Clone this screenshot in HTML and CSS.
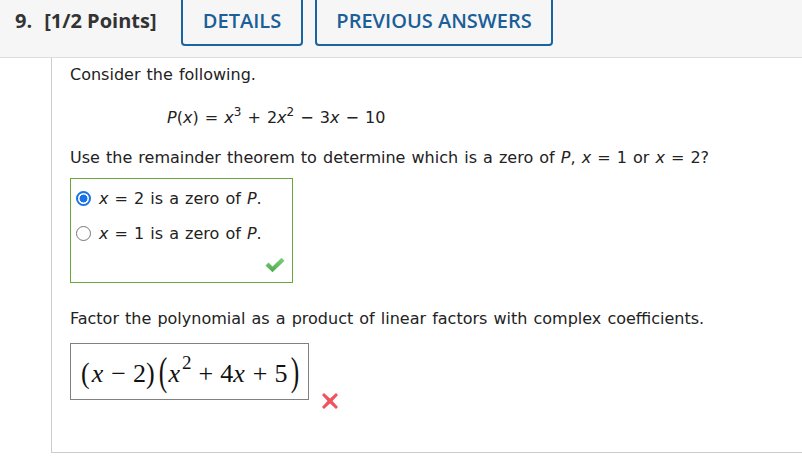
FILE: index.html
```html
<!DOCTYPE html>
<html>
<head>
<meta charset="utf-8">
<link rel="stylesheet" href="styles.css">
</head>
<body>
<div class="header">
  <div class="title"><span class="num">9.</span><span>[1/2 Points]</span></div>
  <div class="tabs">
    <div class="tab tab-details">DETAILS</div>
    <div class="tab tab-prev">PREVIOUS ANSWERS</div>
  </div>
</div>
<div class="panel">
  <p class="intro">Consider the following.</p>
  <p class="formula"><i>P</i>(<i>x</i>) = <i>x</i><sup>3</sup> + 2<i>x</i><sup>2</sup> &minus; 3<i>x</i> &minus; 10</p>
  <p class="q">Use the remainder theorem to determine which is a zero of <i>P</i>, <i>x</i> = 1 or <i>x</i> = 2?</p>
  <div class="choices">
    <div class="choice"><span class="radio on"></span><span><i>x</i> = 2 is a zero of <i>P</i>.</span></div>
    <div class="choice"><span class="radio"></span><span><i>x</i> = 1 is a zero of <i>P</i>.</span></div>
    <div class="mark">
      <svg width="22" height="16" viewBox="0 0 22 16"><defs><linearGradient id="g" x1="0" y1="0" x2="0" y2="1"><stop offset="0" stop-color="#7fd07f"/><stop offset="1" stop-color="#4aa94a"/></linearGradient></defs><path d="M1.5 8.5 L4.5 5.5 L8.5 9.5 L17.5 0.8 L20.5 3.8 L8.5 15.2 Z" fill="url(#g)"/></svg>
    </div>
  </div>
  <p class="q2">Factor the polynomial as a product of linear factors with complex coefficients.</p>
  <div class="answer-row">
    <div class="mathbox"><span class="par">(</span><i>x</i><span class="op">&minus;</span>2<span class="par r">)</span><span class="big">(</span><i>x</i><sup>2</sup><span class="op">+</span>4<i>x</i><span class="op">+</span>5<span class="big r">)</span></div>
    <svg class="cross" width="18" height="18" viewBox="0 0 18 18"><path d="M3 1 L9 6.5 L15 1 L17 3 L11.5 9 L17 15 L15 17 L9 11.5 L3 17 L1 15 L6.5 9 L1 3 Z" fill="#f0545e"/></svg>
  </div>
</div>
</body>
</html>
```
FILE: styles.css
```css
html, body { margin: 0; padding: 0; background: #fff; }
body { width: 802px; height: 457px; overflow: hidden; font-family: "DejaVu Sans", Verdana, sans-serif; color: #222; }

.header {
  height: 57px;
  background: #f6f6f6;
  border-bottom: 1px solid #dcdcdc;
  display: flex;
  align-items: flex-start;
  font-family: "Open Sans", sans-serif;
}
.title {
  font-weight: 700;
  font-size: 20px;
  line-height: 24px;
  color: #333;
  padding: 9px 0 0 15px;
  width: 166px;
  display: flex;
}
.title .num { margin-right: 12px; }
.tabs { display: flex; gap: 12px; margin-top: -6px; }
.tab {
  border: 2px solid #1a64a0;
  border-radius: 4px;
  background: #f6f6f6;
  height: 52px;
  box-sizing: border-box;
  color: #1b5e98;
  font-size: 20px;
  font-weight: 600;
  display: flex;
  align-items: center;
  justify-content: center;
  padding-top: 1px;
}
.tab-details { width: 122px; }
.tab-prev { width: 238px; }

.panel {
  margin-left: 51px;
  border-left: 1px solid #ccc;
  border-bottom: 1px solid #ccc;
  height: 394px;
  padding-left: 18px;
  font-size: 16px;
  line-height: 19px;
  word-spacing: 1px;
}
.panel p { margin: 0; }
.intro { padding-top: 7px; }
.formula { padding: 24px 0 0 97px; }
sup { font-size: 12px; vertical-align: 7px; line-height: 0; }
.q { padding-top: 21px; }
.choices {
  margin-top: 10.5px;
  width: 223px;
  height: 105px;
  border: 1.5px solid #6aa73b;
  box-sizing: border-box;
  position: relative;
  padding-top: 2px;
}
.choice { display: flex; align-items: center; height: 35px; padding-left: 5px; }
.radio {
  width: 15px; height: 15px;
  border: 1px solid #767676;
  border-radius: 50%;
  box-sizing: border-box;
  margin-right: 8px;
  background: #fff;
}
.radio.on { border: 2px solid #1a73e8; background: radial-gradient(circle, #1a73e8 0 3.8px, #fff 4.2px); }
.mark { position: absolute; right: 6px; bottom: 9px; line-height: 0; }
.q2 { padding-top: 26.5px; }
.answer-row { display: flex; align-items: flex-start; margin-top: 14.5px; }
.mathbox {
  border: 1px solid #808080;
  height: 57px;
  box-sizing: border-box;
  width: 239px;
  padding: 0 0 0 10px;
  font-family: "Liberation Serif", "DejaVu Serif", serif;
  font-size: 26px;
  line-height: 55px;
  color: #111;
  white-space: nowrap;
  word-spacing: 0;
}
.mathbox i { margin-right: 1px; }
.mathbox .op { margin: 0 7px; }
.mathbox .par { display: inline-block; transform: scaleY(1.12); margin-right: 2px; }
.mathbox .par.r { margin: 0 3px 0 0; }
.mathbox .big { font-size: 30px; display: inline-block; transform: scale(0.85, 1.3); margin-right: 1px; font-weight: 300; }
.mathbox .big.r { margin-left: 2px; }
.mathbox sup { font-size: 19px; vertical-align: 13px; margin-left: 1px; }
.cross { margin: 49px 0 0 12px; }
```
